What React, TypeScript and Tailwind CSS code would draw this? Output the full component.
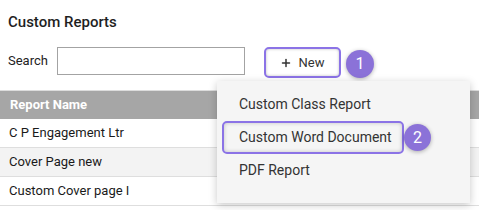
import { Plus } from 'lucide-react';

const ROWS = ['C P Engagement Ltr', 'Cover Page new', 'Custom Cover page I'];

const MENU_ITEMS = ['Custom Class Report', 'Custom Word Document', 'PDF Report'];

const StepBadge = ({ n, className }: { n: number; className: string }) => (
  <span
    className={`absolute flex items-center justify-center rounded-full bg-[#8b72d8] text-white text-[16px] shadow-[0_1px_4px_rgba(0,0,0,0.3)] ${className}`}
  >
    {n}
  </span>
);

export default function App() {
  return (
    <div className="relative w-[479px] h-[210px] overflow-hidden bg-white font-['Roboto',sans-serif] text-[#222]">
      <div className="px-2 pt-[12px]">
        <h1 className="text-[15px] leading-[20px] font-medium text-[#1f1f1f]">Custom Reports</h1>
      </div>

      <div className="flex items-start pl-2 mt-[15px] h-[31px]">
        <span className="text-[13px] leading-[28px] text-[#222]">Search</span>
        <input className="ml-[9px] w-[188px] h-[28px] border border-[#a3a3a3] bg-white outline-none" />
        <button className="ml-[19px] flex items-center justify-center gap-[6px] w-[77px] h-[31px] rounded-[5px] border-2 border-[#8b73e6] bg-white shadow-[inset_0_0_3px_rgba(0,0,0,0.25)] text-[13px] text-[#333]">
          <Plus size={12} strokeWidth={3} />
          New
        </button>
      </div>

      <div className="mt-[12px] border-t border-[#dcdcdc]">
        <div className="h-[28px] bg-[#a6a6a6] pl-[10px] flex items-center text-[13px] font-bold text-white">
          Report Name
        </div>
        {ROWS.map((r, i) => (
          <div
            key={r}
            className={`h-[29px] pl-[9px] flex items-center text-[13px] text-[#1a1a1a] border-b border-[#dedede] ${
              i % 2 === 1 ? 'bg-[#f3f3f3]' : 'bg-white'
            }`}
          >
            {r}
          </div>
        ))}
      </div>

      <StepBadge n={1} className="left-[346px] top-[50px] w-[28px] h-[28px]" />

      <div className="absolute left-[217px] top-[81px] w-[253px] h-[122px] bg-[#f5f5f5] shadow-[0_2px_8px_rgba(0,0,0,0.22)] pt-[7px]">
        {MENU_ITEMS.map((item, i) =>
          i === 1 ? (
            <div
              key={item}
              className="ml-[5px] w-[182px] h-[33px] flex items-center pl-[15px] rounded-[5px] border-2 border-[#8b73e6] shadow-[inset_0_0_4px_rgba(0,0,0,0.2)] text-[14px] text-[#333]"
            >
              {item}
            </div>
          ) : (
            <div key={item} className="h-[33px] flex items-center pl-[22px] text-[14px] text-[#333]">
              {item}
            </div>
          ),
        )}
      </div>

      <StepBadge n={2} className="left-[404px] top-[124px] w-[27px] h-[27px]" />
    </div>
  );
}
